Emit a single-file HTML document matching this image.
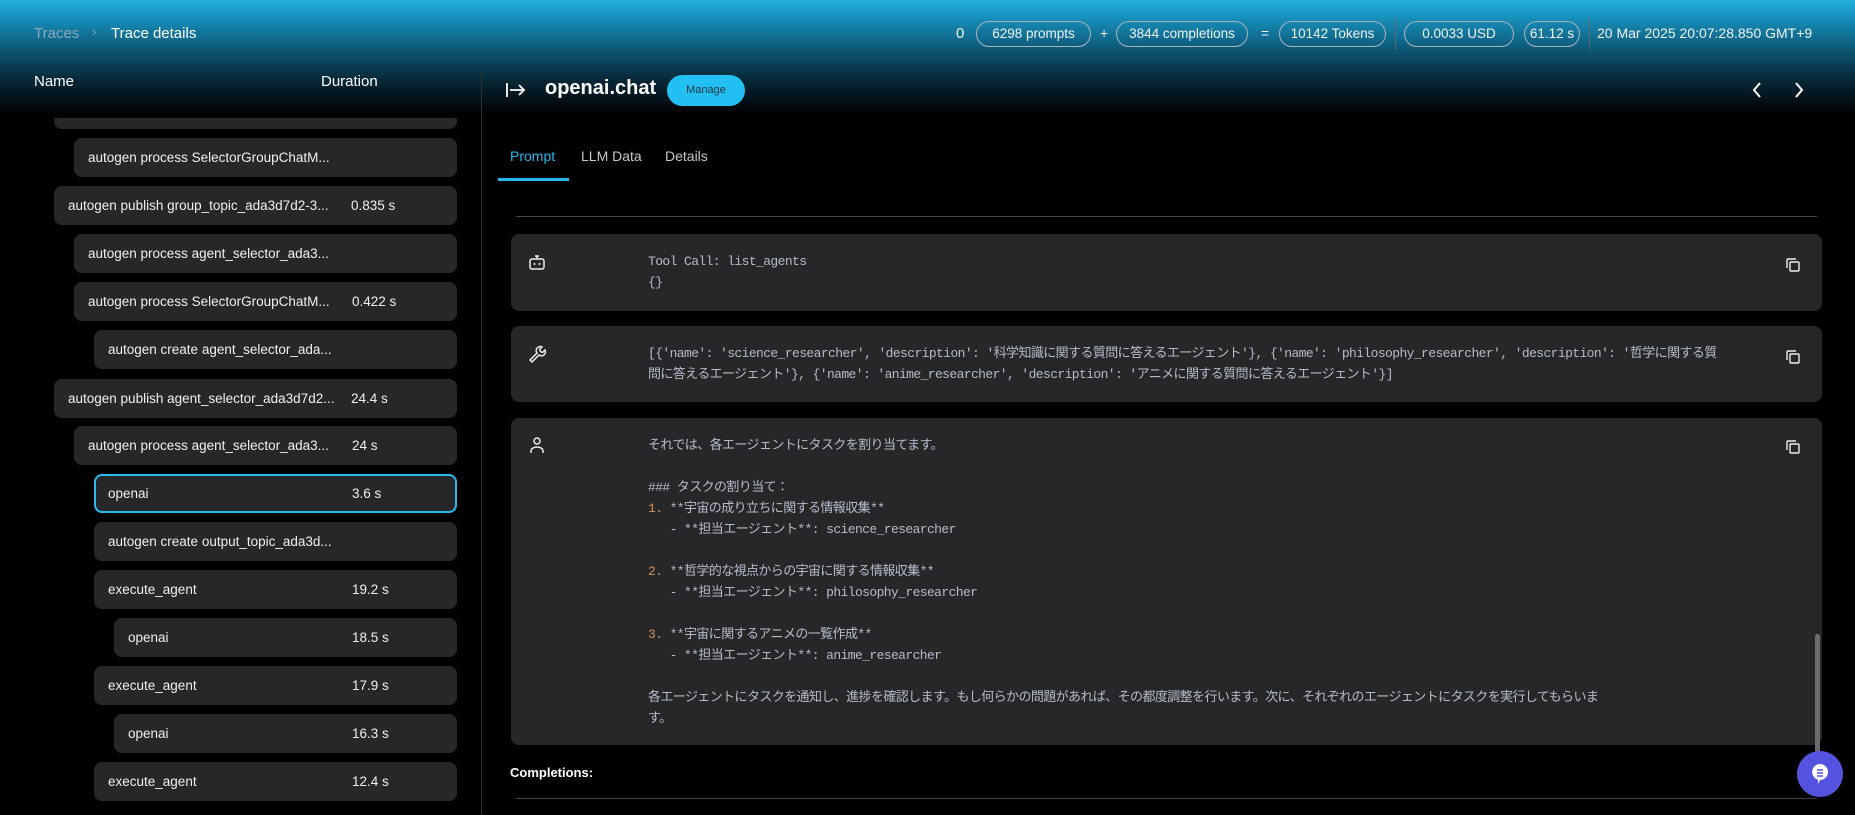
<!DOCTYPE html>
<html><head><meta charset="utf-8"><style>
*{margin:0;padding:0;box-sizing:border-box}
body{width:1855px;height:815px;overflow:hidden;background:#000;font-family:"Liberation Sans","Noto Sans CJK JP",sans-serif;color:#fff;position:relative}
.hdr{position:absolute;left:0;top:0;width:1855px;height:115px;background:linear-gradient(180deg,#22b0e0 0%,#1586b0 20%,#0d5a78 42%,#072a3a 68%,#000 100%)}
.abs{position:absolute}
.pill{position:absolute;top:21px;height:26px;border:1px solid #a9b4bb;border-radius:13px;font-size:13.5px;line-height:24px;text-align:center;color:#f2f2f2}
.t{position:absolute;top:25px;font-size:14px;color:#f2f2f2}
.row{position:absolute;height:39px;background:#27272a;border-radius:8px;font-size:13.5px;line-height:39px;color:#f0f0f0}
.row span{position:absolute}
.card{position:absolute;left:511px;width:1311px;background:#27272a;border-radius:8px}
.mono{position:absolute;left:137px;font-family:"Liberation Mono","Noto Sans CJK JP",monospace;font-size:13px;letter-spacing:-0.6px;line-height:21px;color:#b4bccb;white-space:pre}
.o{color:#d5915a}
.cp{position:absolute;left:1274px}
</style></head><body>
<div class="hdr"></div>
<div class="abs" style="left:34px;top:25px;font-size:15px;color:#8fa9b6">Traces</div>
<div class="abs" style="left:92px;top:24px;font-size:13px;color:#8fa9b6">›</div>
<div class="abs" style="left:111px;top:25px;font-size:15px;color:#fff">Trace details</div>

<div class="t" style="left:956px;font-size:15px">0</div>
<div class="pill" style="left:976px;width:115px">6298 prompts</div>
<div class="t" style="left:1100px">+</div>
<div class="pill" style="left:1116px;width:132px">3844 completions</div>
<div class="t" style="left:1261px">=</div>
<div class="pill" style="left:1279px;width:107px">10142 Tokens</div>
<div class="abs" style="left:1395px;top:18px;width:1px;height:32px;background:#5a6a72"></div>
<div class="pill" style="left:1404px;width:110px">0.0033 USD</div>
<div class="pill" style="left:1524px;width:56px">61.12 s</div>
<div class="abs" style="left:1589px;top:18px;width:1px;height:32px;background:#5a6a72"></div>
<div class="t" style="left:1597px">20 Mar 2025 20:07:28.850 GMT+9</div>

<div class="abs" style="left:34px;top:73px;font-size:15px">Name</div>
<div class="abs" style="left:321px;top:73px;font-size:15px">Duration</div>
<div class="abs" style="left:481px;top:73px;width:1px;height:742px;background:#333"></div>

<div style="position:absolute;left:0;top:118px;width:480px;height:20px;overflow:hidden">
<div class="row" style="left:54px;width:403px;top:-28px"></div>
</div>
<div class="row" style="left:74px;width:383px;top:138px"><span style="left:14px">autogen process SelectorGroupChatM...</span></div>
<div class="row" style="left:54px;width:403px;top:186px"><span style="left:14px">autogen publish group_topic_ada3d7d2-3...</span><span style="left:297px">0.835 s</span></div>
<div class="row" style="left:74px;width:383px;top:234px"><span style="left:14px">autogen process agent_selector_ada3...</span></div>
<div class="row" style="left:74px;width:383px;top:282px"><span style="left:14px">autogen process SelectorGroupChatM...</span><span style="left:278px">0.422 s</span></div>
<div class="row" style="left:94px;width:363px;top:330px"><span style="left:14px">autogen create agent_selector_ada...</span></div>
<div class="row" style="left:54px;width:403px;top:379px"><span style="left:14px">autogen publish agent_selector_ada3d7d2...</span><span style="left:297px">24.4 s</span></div>
<div class="row" style="left:74px;width:383px;top:426px"><span style="left:14px">autogen process agent_selector_ada3...</span><span style="left:278px">24 s</span></div>
<div class="row" style="left:94px;width:363px;top:474px;border:2px solid #29b9ea;line-height:35px"><span style="left:12px">openai</span><span style="left:256px">3.6 s</span></div>
<div class="row" style="left:94px;width:363px;top:522px"><span style="left:14px">autogen create output_topic_ada3d...</span></div>
<div class="row" style="left:94px;width:363px;top:570px"><span style="left:14px">execute_agent</span><span style="left:258px">19.2 s</span></div>
<div class="row" style="left:114px;width:343px;top:618px"><span style="left:14px">openai</span><span style="left:238px">18.5 s</span></div>
<div class="row" style="left:94px;width:363px;top:666px"><span style="left:14px">execute_agent</span><span style="left:258px">17.9 s</span></div>
<div class="row" style="left:114px;width:343px;top:714px"><span style="left:14px">openai</span><span style="left:238px">16.3 s</span></div>
<div class="row" style="left:94px;width:363px;top:762px"><span style="left:14px">execute_agent</span><span style="left:258px">12.4 s</span></div>

<svg class="abs" style="left:505px;top:81px" width="22" height="18" viewBox="0 0 22 18" fill="none" stroke="#fff" stroke-width="1.8"><path d="M2 2v14M5 9h14M14 4l5 5-5 5"/></svg>
<div class="abs" style="left:545px;top:77px;font-size:20px;font-weight:bold">openai.chat</div>
<div class="abs" style="left:667px;top:75px;width:78px;height:31px;border-radius:16px;background:#22c0f2;color:#1b3440;font-size:11px;line-height:31px;text-align:center">Manage</div>
<svg class="abs" style="left:1750px;top:81px" width="60" height="18" viewBox="0 0 60 18" fill="none" stroke="#fff" stroke-width="2"><path d="M10 2l-6 7 6 7M46 2l6 7-6 7"/></svg>

<div class="abs" style="left:510px;top:148px;font-size:14px;color:#26b8ea">Prompt</div>
<div class="abs" style="left:581px;top:148px;font-size:14px;color:#c8c8c8">LLM Data</div>
<div class="abs" style="left:665px;top:148px;font-size:14px;color:#c8c8c8">Details</div>
<div class="abs" style="left:498px;top:178px;width:71px;height:3px;background:#26b8ea"></div>
<div class="abs" style="left:516px;top:216px;width:1301px;height:1px;background:#444"></div>

<div class="card" style="top:234px;height:77px">
<svg class="abs" style="left:16px;top:19px" width="20" height="20" viewBox="0 0 20 20" fill="none" stroke="#eee" stroke-width="1.5"><rect x="3" y="6" width="14" height="10" rx="2"/><path d="M10 6V3M8 3h4"/><path d="M7.5 10v2M12.5 10v2"/></svg>
<div class="mono" style="top:17px">Tool Call: list_agents
{}</div>
<svg class="cp" style="top:23px" width="16" height="16" viewBox="0 0 16 16" fill="none" stroke="#eee" stroke-width="1.4"><path d="M2 11V3a1 1 0 0 1 1-1h8"/><rect x="5" y="5" width="9" height="9" rx="1"/></svg>
</div>

<div class="card" style="top:326px;height:76px">
<svg class="abs" style="left:16px;top:17px" width="20" height="20" viewBox="0 0 20 20" fill="none" stroke="#eee" stroke-width="1.5"><path d="M3 17l7-7a4 4 0 0 1 5-6l-2.5 2.5 1 2 2 1L18 7a4 4 0 0 1-6 5l-7 7z"/></svg>
<div class="mono" style="top:17px">[{'name': 'science_researcher', 'description': '科学知識に関する質問に答えるエージェント'}, {'name': 'philosophy_researcher', 'description': '哲学に関する質
問に答えるエージェント'}, {'name': 'anime_researcher', 'description': 'アニメに関する質問に答えるエージェント'}]</div>
<svg class="cp" style="top:23px" width="16" height="16" viewBox="0 0 16 16" fill="none" stroke="#eee" stroke-width="1.4"><path d="M2 11V3a1 1 0 0 1 1-1h8"/><rect x="5" y="5" width="9" height="9" rx="1"/></svg>
</div>

<div class="card" style="top:418px;height:327px">
<svg class="abs" style="left:16px;top:17px" width="20" height="20" viewBox="0 0 20 20" fill="none" stroke="#eee" stroke-width="1.5"><circle cx="10" cy="6" r="3"/><path d="M4 18v-2a6 4 0 0 1 12 0v2"/></svg>
<div class="mono" style="top:17px">それでは、各エージェントにタスクを割り当てます。

### タスクの割り当て：
<span class="o">1.</span> **宇宙の成り立ちに関する情報収集**
   - **担当エージェント**: science_researcher

<span class="o">2.</span> **哲学的な視点からの宇宙に関する情報収集**
   - **担当エージェント**: philosophy_researcher

<span class="o">3.</span> **宇宙に関するアニメの一覧作成**
   - **担当エージェント**: anime_researcher

各エージェントにタスクを通知し、進捗を確認します。もし何らかの問題があれば、その都度調整を行います。次に、それぞれのエージェントにタスクを実行してもらいま
す。</div>
<svg class="cp" style="top:21px" width="16" height="16" viewBox="0 0 16 16" fill="none" stroke="#eee" stroke-width="1.4"><path d="M2 11V3a1 1 0 0 1 1-1h8"/><rect x="5" y="5" width="9" height="9" rx="1"/></svg>
</div>

<div class="abs" style="left:510px;top:765px;font-size:13px;font-weight:bold">Completions:</div>
<div class="abs" style="left:516px;top:798px;width:1301px;height:1px;background:#444"></div>
<div class="abs" style="left:1815px;top:634px;width:5px;height:120px;border-radius:3px;background:#6b6b6b"></div>
<div class="abs" style="left:1797px;top:751px;width:46px;height:46px;border-radius:50%;background:#5552e0"></div>
<svg class="abs" style="left:1809px;top:762px" width="22" height="24" viewBox="0 0 22 24"><path d="M11 2a8 8 0 0 1 0 16l-2 4v-4.3A8 8 0 0 1 11 2z" fill="#fff"/><path d="M8 8h6M8 11h6M8 14h6" stroke="#5552e0" stroke-width="1.5"/></svg>
</body></html>
